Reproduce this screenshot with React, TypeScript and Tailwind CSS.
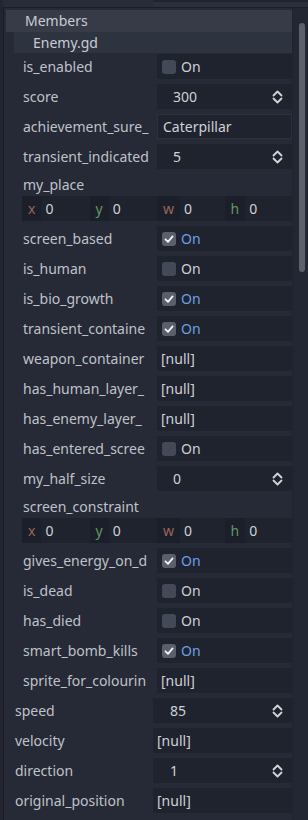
import React from "react";

type Row =
  | { kind: "check"; label: string; on: boolean }
  | { kind: "num"; label: string; value: string }
  | { kind: "text"; label: string; value: string; border?: boolean }
  | { kind: "vec"; label: string };

const upper: Row[] = [
  { kind: "check", label: "is_enabled", on: false },
  { kind: "num", label: "score", value: "300" },
  { kind: "text", label: "achievement_sure_", value: "Caterpillar", border: true },
  { kind: "num", label: "transient_indicated", value: "5" },
  { kind: "vec", label: "my_place" },
  { kind: "check", label: "screen_based", on: true },
  { kind: "check", label: "is_human", on: false },
  { kind: "check", label: "is_bio_growth", on: true },
  { kind: "check", label: "transient_containe", on: true },
  { kind: "text", label: "weapon_container", value: "[null]" },
  { kind: "text", label: "has_human_layer_", value: "[null]" },
  { kind: "text", label: "has_enemy_layer_", value: "[null]" },
  { kind: "check", label: "has_entered_scree", on: false },
  { kind: "num", label: "my_half_size", value: "0" },
  { kind: "vec", label: "screen_constraint" },
  { kind: "check", label: "gives_energy_on_d", on: true },
  { kind: "check", label: "is_dead", on: false },
  { kind: "check", label: "has_died", on: false },
  { kind: "check", label: "smart_bomb_kills", on: true },
  { kind: "text", label: "sprite_for_colourin", value: "[null]" },
];

const lower: Row[] = [
  { kind: "num", label: "speed", value: "85" },
  { kind: "text", label: "velocity", value: "[null]" },
  { kind: "num", label: "direction", value: "1" },
  { kind: "text", label: "original_position", value: "[null]" },
];

function UpDown() {
  return (
    <svg width="11" height="16" viewBox="0 0 11 16" fill="none">
      <path d="M1.5 6.5 L5.5 2.5 L9.5 6.5" stroke="#d3d5da" strokeWidth="1.8" strokeLinecap="round" strokeLinejoin="round" />
      <path d="M1.5 9.5 L5.5 13.5 L9.5 9.5" stroke="#d3d5da" strokeWidth="1.8" strokeLinecap="round" strokeLinejoin="round" />
    </svg>
  );
}

function CheckBox({ on }: { on: boolean }) {
  return (
    <div
      className={
        on
          ? "w-[14px] h-[14px] rounded-[3px] bg-[#5a5f6b] flex items-center justify-center"
          : "w-[14px] h-[14px] rounded-[3px] bg-[#444957]"
      }
    >
      {on && (
        <svg width="10" height="10" viewBox="0 0 10 10" fill="none">
          <path d="M1.5 5.3 L4 7.8 L8.6 2.4" stroke="#f2f3f5" strokeWidth="1.8" strokeLinecap="round" strokeLinejoin="round" />
        </svg>
      )}
    </div>
  );
}

function Value({ row, lowerSec }: { row: Row; lowerSec: boolean }) {
  if (row.kind === "check") {
    return (
      <div className="flex-1 h-[25px] bg-[#1f232e] flex items-center pl-[5px] gap-[5px]">
        <CheckBox on={row.on} />
        <span className={row.on ? "text-[#6c9fe8]" : "text-[#cdd0d5]"}>On</span>
      </div>
    );
  }
  if (row.kind === "num") {
    return (
      <div className={"flex-1 h-[25px] bg-[#1f232e] flex items-center pr-[9px] text-[#cfd1d6] " + (lowerSec ? "pl-[17px]" : "pl-[16px]")}>
        <span className="flex-1">{row.value}</span>
        <UpDown />
      </div>
    );
  }
  if (row.kind === "text") {
    return row.border ? (
      <div className="flex-1 h-[25px] bg-[#1f232e] border border-[#2c313d] flex items-center pl-[5px] text-[#cfd1d6]">
        {row.value}
      </div>
    ) : (
      <div className="flex-1 h-[25px] bg-[#1f232e] flex items-center pl-[4px] text-[#cfd1d6]">{row.value}</div>
    );
  }
  return null;
}

function VecCell({ axis, color }: { axis: string; color: string }) {
  return (
    <div className="flex-1 flex h-full">
      <div className={"h-full bg-[#1b1f29] flex items-center px-[6px] " + color}>{axis}</div>
      <div className="flex-1 h-full flex items-center pl-[4px] text-[#cfd1d6]">0</div>
    </div>
  );
}

function PropRow({ row, lowerSec }: { row: Row; lowerSec: boolean }) {
  if (row.kind === "vec") {
    return (
      <div className="flex flex-col">
        <div className="h-[22px] flex items-center pl-[19px] text-[#bfc2c9] whitespace-nowrap">{row.label}</div>
        <div className="ml-[18px] h-[25px] bg-[#1f232e] flex">
          <VecCell axis="x" color="text-[#9a6459]" />
          <VecCell axis="y" color="text-[#5f9866]" />
          <VecCell axis="w" color="text-[#9a6459]" />
          <VecCell axis="h" color="text-[#5f9866]" />
        </div>
      </div>
    );
  }
  return (
    <div className="flex h-[25px] items-center">
      <div
        className={
          "h-full flex items-center overflow-hidden whitespace-nowrap text-[#bfc2c9] " +
          (lowerSec ? "w-[149px] pl-[11px]" : "w-[153px] pl-[19px]")
        }
      >
        {row.label}
      </div>
      <Value row={row} lowerSec={lowerSec} />
    </div>
  );
}

export default function App() {
  return (
    <div className="w-[308px] h-[820px] overflow-hidden bg-[#21252f] flex flex-col font-['Noto_Sans',sans-serif] text-[14px] leading-none">
      {/* top strip */}
      <div className="h-[7px] flex shrink-0">
        <div className="w-[3px] bg-[#21252f]" />
        <div className="w-[150px] bg-[#272c38]" />
        <div className="flex-1 flex flex-col">
          <div className="h-[2px] bg-[#20242e]" />
          <div className="flex-1 bg-[#2a2f3c]" />
        </div>
      </div>
      <div className="flex-1 flex ml-[3px] border-l border-t border-[#1a1d26] bg-[#252a36]">
        <div className="flex-1 flex flex-col pt-[2px]">
          <div className="ml-[2px] h-[22px] bg-[#363b47] flex items-center pl-[19px] text-[#c9ccd2]">Members</div>
          <div className="ml-[10px] h-[21px] bg-[#2e3340] flex items-center pl-[19px] text-[#c9ccd2]">Enemy.gd</div>
          <div className="mt-[1px] flex flex-col gap-[5px]">
            {upper.map((r, i) => (
              <PropRow key={"u" + i} row={r} lowerSec={false} />
            ))}
            {lower.map((r, i) => (
              <PropRow key={"l" + i} row={r} lowerSec={true} />
            ))}
          </div>
        </div>
        {/* scrollbar */}
        <div className="w-[16px] bg-[#232733] border-l border-[#1e222c] flex justify-center">
          <div className="mt-[15px] w-[6px] h-[249px] rounded-[3px] bg-[#5c606b] ml-[2px]" />
        </div>
      </div>
    </div>
  );
}
